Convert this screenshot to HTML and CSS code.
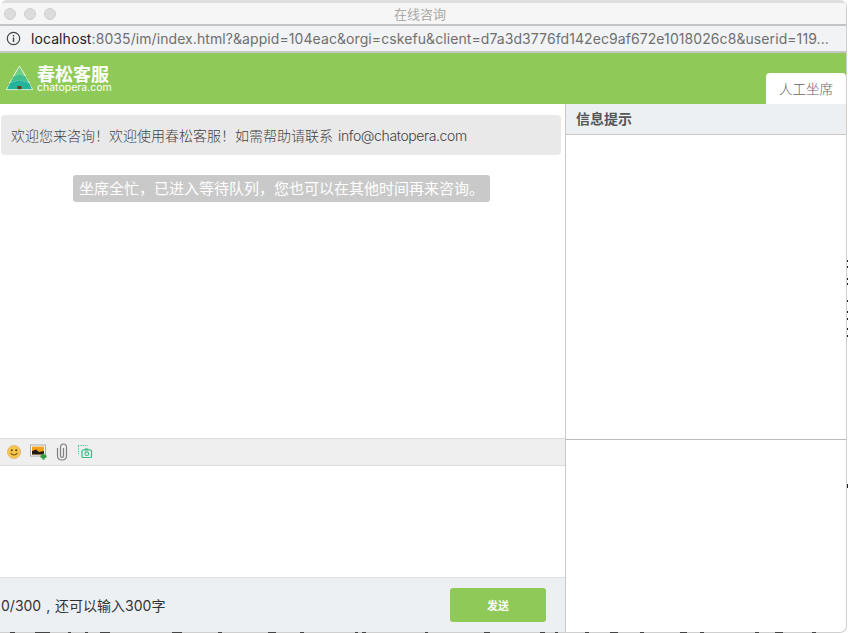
FILE: index.html
```html
<!DOCTYPE html>
<html lang="zh">
<head>
<meta charset="utf-8">
<title>在线咨询</title>
<link rel="stylesheet" href="styles.css">
</head>
<body>
<div class="desk">
  <div class="window">
    <div class="titlebar">
      <div class="lights"><i></i><i></i><i></i></div>
      <div class="wintitle">在线咨询</div>
    </div>
    <div class="urlbar">
      <svg class="info" width="15" height="15" viewBox="0 0 15 15"><circle cx="7.5" cy="7.5" r="6.2" fill="none" stroke="#444" stroke-width="1.2"/><rect x="6.8" y="6.5" width="1.4" height="4.5" fill="#444"/><rect x="6.8" y="4" width="1.4" height="1.5" fill="#444"/></svg>
      <div class="url"><span class="host">localhost</span>:8035/im/index.html?&amp;appid=104eac&amp;orgi=cskefu&amp;client=d7a3d3776fd142ec9af672e1018026c8&amp;userid=119...</div>
    </div>
    <header class="header">
      <div class="logo">
        <svg width="30" height="27" viewBox="0 0 30 27">
          <path d="M13.5 1.2 L19.6 11 L18.8 11.4 L23.6 18 L22.8 18.4 L26.6 24.6 L.4 24.6 L4.2 18.4 L3.4 18 L8.2 11.4 L7.4 11 Z" fill="#fff" stroke="#fff" stroke-width=".8" stroke-linejoin="round"/>
          <path d="M13.5 1.8 L19 11 L13.5 9 L8 11 Z" fill="#6fcf7c"/>
          <path d="M13.5 9 L19 11 L23 18 L13.5 15 L4 18 L8 11 Z" fill="#3fc08c"/>
          <path d="M13.5 15 L23 18 L26 24.2 L1 24.2 L4 18 Z" fill="#22b39a"/>
          <rect x="11.5" y="21" width="4" height="3.2" fill="#6b3f1c"/>
        </svg>
        <div class="logotext">
          <div class="logocn">春松客服</div>
          <div class="logoen">chatopera.com</div>
        </div>
      </div>
      <div class="tab">人工坐席</div>
    </header>
    <main class="body">
      <section class="chat">
        <div class="messages">
          <div class="welcome">欢迎您来咨询！欢迎使用春松客服！如需帮助请联系 <span class="mail">info@chatopera.com</span></div>
          <div class="notice-row"><div class="notice">坐席全忙，已进入等待队列，您也可以在其他时间再来咨询。</div></div>
        </div>
        <div class="toolbar">
          <svg class="tool" width="16" height="16" viewBox="0 0 16 16">
            <circle cx="8" cy="8" r="6.5" fill="#f5c64a" stroke="#e2b878" stroke-width="1"/>
            <circle cx="5.8" cy="6.3" r="1" fill="#5a3d10"/><circle cx="10.2" cy="6.3" r="1" fill="#5a3d10"/>
            <path d="M4.5 9 Q8 13 11.5 9" fill="none" stroke="#7a4d10" stroke-width="1.1"/>
          </svg>
          <svg class="tool" width="17" height="16" viewBox="0 0 17 16">
            <rect x="0.5" y="1" width="15" height="11" fill="#fff" stroke="#aaa"/>
            <rect x="2" y="2.5" width="12" height="8" fill="#f2a11e"/>
            <path d="M2 10.5 L2 7 L6 5.5 L9 8 L14 7 L14 10.5 Z" fill="#221a10"/>
            <path d="M10.5 12.5 H16.5 M13.5 9.5 V15.5" stroke="#2a9a3c" stroke-width="2.4"/>
          </svg>
          <svg class="tool" width="14" height="18" viewBox="0 0 14 18">
            <path d="M2.5 5 V12.5 Q2.5 17 7 17 Q11.5 17 11.5 12.5 V4.5 Q11.5 1 8.5 1 Q5.5 1 5.5 4.5 V12.5 Q5.5 14.5 7 14.5 Q8.5 14.5 8.5 12.5 V5" fill="none" stroke="#808080" stroke-width="1.2"/>
          </svg>
          <svg class="tool" width="16" height="16" viewBox="0 0 16 16">
            <path d="M1 1.5 H11" stroke="#3cc78a" stroke-width="1" stroke-dasharray="1.2 1.2" fill="none"/>
            <path d="M1.5 2 V11" stroke="#3cc78a" stroke-width="1" stroke-dasharray="1.2 1.2" fill="none"/>
            <rect x="5" y="6" width="9.5" height="7.5" rx="1" fill="none" stroke="#2fc184" stroke-width="1.2"/>
            <rect x="7.5" y="4.5" width="4" height="1.6" fill="#2fc184"/>
            <circle cx="9.8" cy="9.7" r="1.8" fill="none" stroke="#2fc184" stroke-width="1.1"/>
          </svg>
        </div>
        <div class="input"></div>
        <div class="footer">
          <div class="count">0/300 , 还可以输入300字</div>
          <button class="send">发送</button>
        </div>
      </section>
      <aside class="side">
        <div class="side-title">信息提示</div>
        <div class="side-main"></div>
        <div class="side-sub"></div>
      </aside>
    </main>
  </div>
  <svg class="peek" width="848" height="633" viewBox="0 0 848 633">
    <path d="M10 632.5h5M35 632.5h15M68 632.5h3M85 632.5h3M100 632.5h10M172 632.5h10M218 632.5h4M268 632.5h8M300 632.5h4M355 632.5h3M362 632.5h4M425 632.5h3M484 632.5h6M540 632.5h5M555 632.5h3M585 632.5h4M610 632.5h8M640 632.5h4M680 632.5h7M700 632.5h4M755 632.5h4M775 632.5h8M812 632.5h4" stroke="#444" stroke-width="1" fill="none"/>
    <path d="M847.5 260v2M847.5 266v2M847.5 278v2M847.5 283v2M847.5 300v2M847.5 311v2M847.5 318v2M847.5 328v2M847.5 335v2M847.5 484v4" stroke="#222" stroke-width="1" fill="none"/>
  </svg>
</div>
</body>
</html>
```
FILE: styles.css
```css
* { box-sizing: border-box; }
html, body { margin: 0; height: 100%; overflow: hidden; background: #fff; }
body { font-family: "Inter", "Noto Sans CJK SC", sans-serif; color: #333; }
.desk { width: 848px; height: 633px; position: relative; background: #fff; }
.window {
  width: 847px; height: 633px; display: flex; flex-direction: column;
  border-right: 1px solid #cfcfcf; border-bottom: 1px solid #cfcfcf;
  border-radius: 7px 7px 7px 0; overflow: hidden;
}
.peek { position: absolute; left: 0; top: 0; pointer-events: none; }
.titlebar {
  height: 26px; flex: none; display: flex; align-items: center; position: relative;
  background: #f6f6f6; border-top: 3px solid #dedede; border-bottom: 2px solid #c4c4c4;
}
.lights { display: flex; gap: 8px; padding-left: 4px; }
.lights i { width: 12px; height: 12px; border-radius: 50%; background: #dcdcdc; border: 1px solid #d0d0d0; display: block; }
.wintitle { position: absolute; left: 0; right: 0; top: 0; bottom: 0; display: flex; align-items: center; justify-content: center; font: 13px "Noto Sans CJK SC", sans-serif; color: #a9a9a9; padding-right: 6px; }
.urlbar {
  height: 27px; flex: none; display: flex; align-items: center; gap: 10px; padding-left: 6px;
  background: #f2f3f5; border-bottom: 2px solid #c6c6c6;
}
.url { font: 14px "Inter", sans-serif; color: #6f6f6f; white-space: nowrap; letter-spacing: .08px; }
.host { color: #222; }
.header { height: 51px; flex: none; background: #8fca58; display: flex; justify-content: space-between; align-items: flex-end; }
.logo { display: flex; align-items: center; gap: 1px; padding-left: 6px; height: 100%; }
.logotext { color: #fff; padding-top: 1px; }
.logocn { font: 700 18px/17px "Noto Sans CJK SC", sans-serif; }
.logoen { font: 400 10.5px/11px "Inter", sans-serif; }
.tab {
  width: 80px; height: 31px; background: #fff; border-radius: 4px 4px 0 0;
  font: 300 13.5px/31px "Noto Sans CJK SC", sans-serif; color: #666; text-align: center;
}
.body { flex: 1; display: flex; min-height: 0; }
.chat { width: 565px; flex: none; display: flex; flex-direction: column; }
.messages { height: 334px; flex: none; padding: 11px 4px 0 1px; }
.welcome {
  height: 40px; background: #e9e9e9; border-radius: 4px; padding-left: 10px;
  font: 300 14px/40px "Noto Sans CJK SC", sans-serif; color: #444; white-space: nowrap;
}
.mail { font-family: "Inter", sans-serif; letter-spacing: -.38px; margin-left: 2px; }
.notice-row { display: flex; justify-content: center; padding: 20px 0 0 1px; }
.notice {
  height: 27px; background: #c9c9c9; border-radius: 3px; padding: 0 6px;
  font: 400 15px/26px "Noto Sans CJK SC", sans-serif; color: #fff; white-space: nowrap;
}
.toolbar {
  height: 28px; flex: none; background: #efefef; border-top: 1px solid #dcdcdc; border-bottom: 1px solid #dcdcdc;
  display: flex; align-items: center; padding-left: 6px; gap: 8px;
}
.tool { display: block; }
.input { flex: 1; background: #fff; }
.footer {
  height: 55px; flex: none; background: #ecf0f3; border-top: 1px solid #dfdfdf;
  display: flex; justify-content: space-between; align-items: center; padding: 0 19px 0 1px;
}
.count { font: 14px "Inter", "Noto Sans CJK SC", sans-serif; color: #333; padding-bottom: 1px; word-spacing: 1px; }
.send {
  width: 96px; height: 34px; background: #8fca58; border: 0; border-radius: 3px; color: #fff;
  font: 700 11px "Noto Sans CJK SC", sans-serif; padding: 0;
}
.side { flex: 1; display: flex; flex-direction: column; border-left: 1px solid #c9c9c9; }
.side-title {
  height: 31px; flex: none; background: #ecf0f3; border-bottom: 1px solid #c9c9c9;
  font: 700 14px/29px "Noto Sans CJK SC", sans-serif; color: #555; padding-left: 10px;
}
.side-main { height: 305px; flex: none; border-bottom: 1px solid #bbb; }
.side-sub { flex: 1; }
```
